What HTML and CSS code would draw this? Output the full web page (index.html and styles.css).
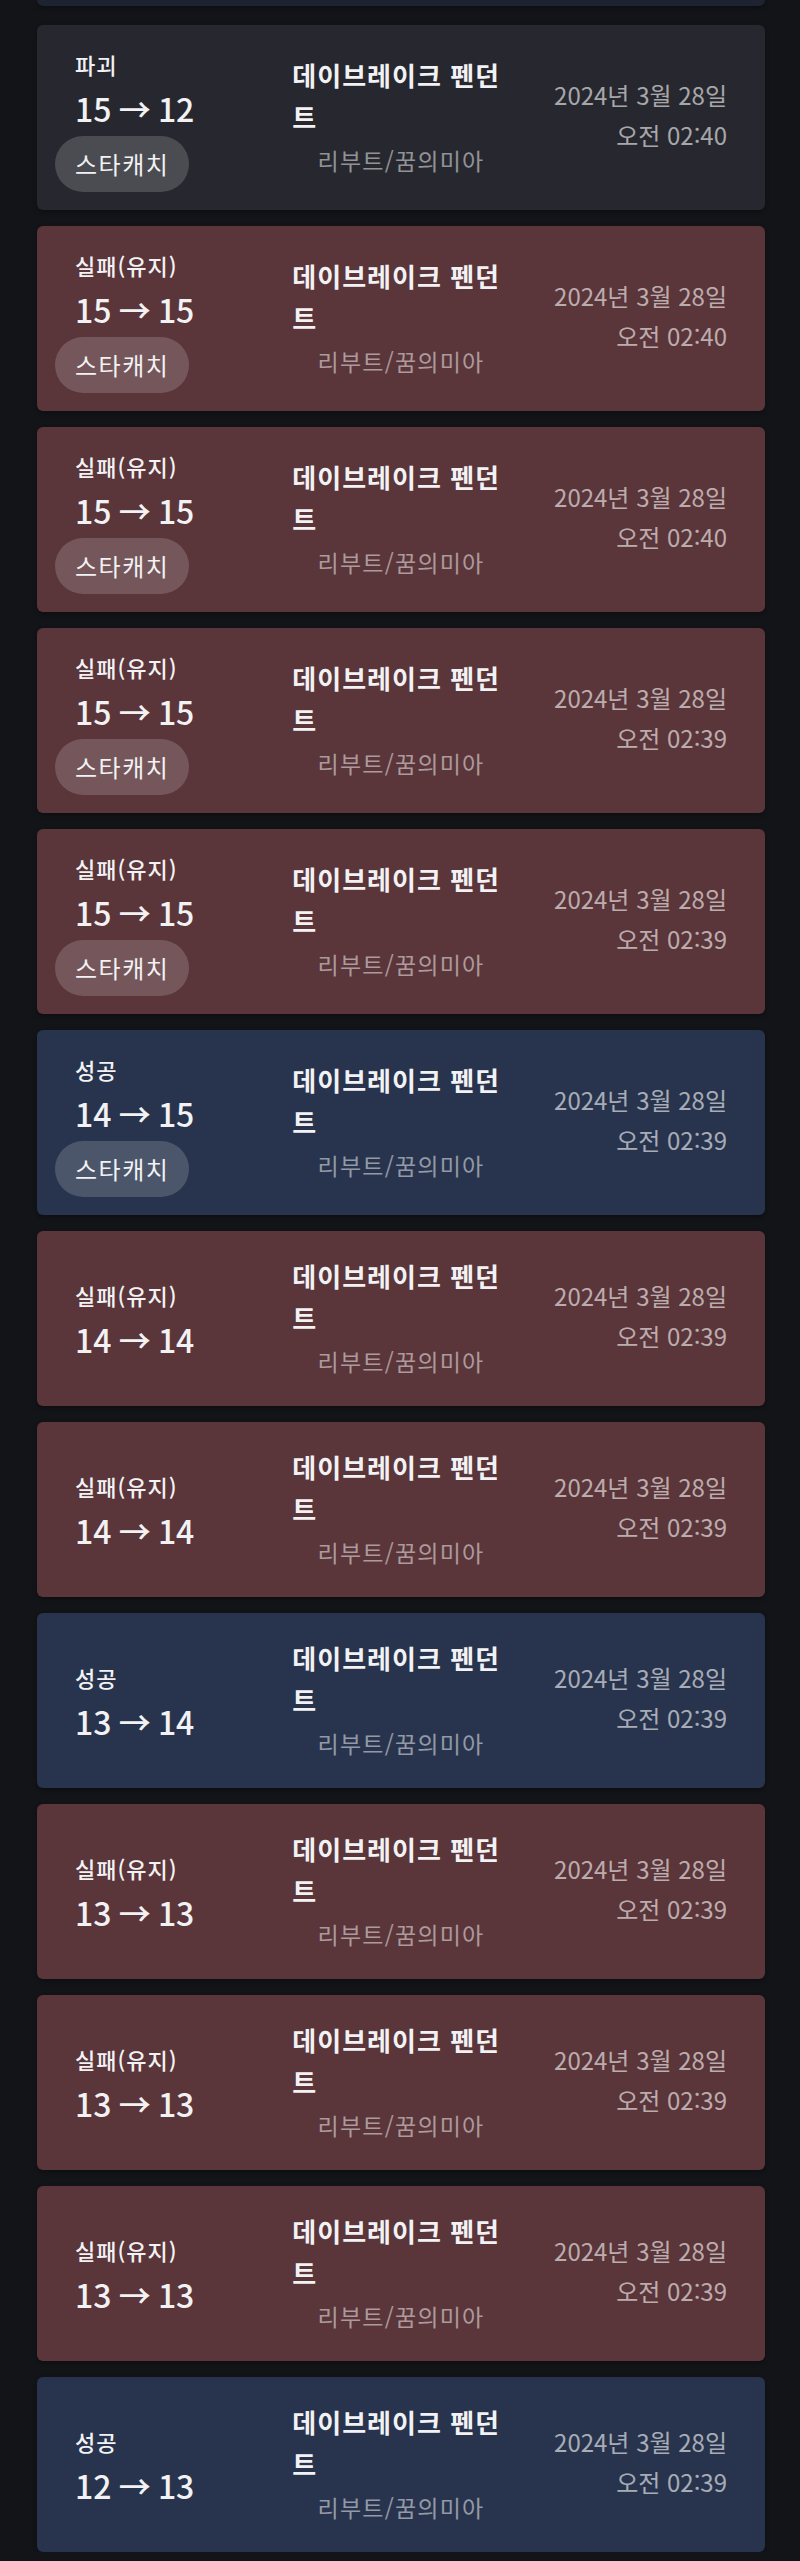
FILE: index.html
```html
<!DOCTYPE html>
<html lang="ko">
<head>
  <meta charset="UTF-8">
  <title>스타포스 강화 기록</title>
  <link rel="stylesheet" href="styles.css">
</head>
<body>
<div class="list">
  <div class="card card-prev"></div>

  <div class="card destroy">
    <div class="result">
      <div class="label">파괴</div>
      <div class="stars">15 → 12</div>
      <span class="badge">스타캐치</span>
    </div>
    <div class="item">
      <div class="item-name">데이브레이크 펜던트</div>
      <div class="item-owner">리부트/꿈의미아</div>
    </div>
    <div class="date">2024년 3월 28일<br>오전 02:40</div>
  </div>

  <div class="card fail">
    <div class="result">
      <div class="label">실패(유지)</div>
      <div class="stars">15 → 15</div>
      <span class="badge">스타캐치</span>
    </div>
    <div class="item">
      <div class="item-name">데이브레이크 펜던트</div>
      <div class="item-owner">리부트/꿈의미아</div>
    </div>
    <div class="date">2024년 3월 28일<br>오전 02:40</div>
  </div>

  <div class="card fail">
    <div class="result">
      <div class="label">실패(유지)</div>
      <div class="stars">15 → 15</div>
      <span class="badge">스타캐치</span>
    </div>
    <div class="item">
      <div class="item-name">데이브레이크 펜던트</div>
      <div class="item-owner">리부트/꿈의미아</div>
    </div>
    <div class="date">2024년 3월 28일<br>오전 02:40</div>
  </div>

  <div class="card fail">
    <div class="result">
      <div class="label">실패(유지)</div>
      <div class="stars">15 → 15</div>
      <span class="badge">스타캐치</span>
    </div>
    <div class="item">
      <div class="item-name">데이브레이크 펜던트</div>
      <div class="item-owner">리부트/꿈의미아</div>
    </div>
    <div class="date">2024년 3월 28일<br>오전 02:39</div>
  </div>

  <div class="card fail">
    <div class="result">
      <div class="label">실패(유지)</div>
      <div class="stars">15 → 15</div>
      <span class="badge">스타캐치</span>
    </div>
    <div class="item">
      <div class="item-name">데이브레이크 펜던트</div>
      <div class="item-owner">리부트/꿈의미아</div>
    </div>
    <div class="date">2024년 3월 28일<br>오전 02:39</div>
  </div>

  <div class="card success">
    <div class="result">
      <div class="label">성공</div>
      <div class="stars">14 → 15</div>
      <span class="badge">스타캐치</span>
    </div>
    <div class="item">
      <div class="item-name">데이브레이크 펜던트</div>
      <div class="item-owner">리부트/꿈의미아</div>
    </div>
    <div class="date">2024년 3월 28일<br>오전 02:39</div>
  </div>

  <div class="card fail">
    <div class="result">
      <div class="label">실패(유지)</div>
      <div class="stars">14 → 14</div>
    </div>
    <div class="item">
      <div class="item-name">데이브레이크 펜던트</div>
      <div class="item-owner">리부트/꿈의미아</div>
    </div>
    <div class="date">2024년 3월 28일<br>오전 02:39</div>
  </div>

  <div class="card fail">
    <div class="result">
      <div class="label">실패(유지)</div>
      <div class="stars">14 → 14</div>
    </div>
    <div class="item">
      <div class="item-name">데이브레이크 펜던트</div>
      <div class="item-owner">리부트/꿈의미아</div>
    </div>
    <div class="date">2024년 3월 28일<br>오전 02:39</div>
  </div>

  <div class="card success">
    <div class="result">
      <div class="label">성공</div>
      <div class="stars">13 → 14</div>
    </div>
    <div class="item">
      <div class="item-name">데이브레이크 펜던트</div>
      <div class="item-owner">리부트/꿈의미아</div>
    </div>
    <div class="date">2024년 3월 28일<br>오전 02:39</div>
  </div>

  <div class="card fail">
    <div class="result">
      <div class="label">실패(유지)</div>
      <div class="stars">13 → 13</div>
    </div>
    <div class="item">
      <div class="item-name">데이브레이크 펜던트</div>
      <div class="item-owner">리부트/꿈의미아</div>
    </div>
    <div class="date">2024년 3월 28일<br>오전 02:39</div>
  </div>

  <div class="card fail">
    <div class="result">
      <div class="label">실패(유지)</div>
      <div class="stars">13 → 13</div>
    </div>
    <div class="item">
      <div class="item-name">데이브레이크 펜던트</div>
      <div class="item-owner">리부트/꿈의미아</div>
    </div>
    <div class="date">2024년 3월 28일<br>오전 02:39</div>
  </div>

  <div class="card fail">
    <div class="result">
      <div class="label">실패(유지)</div>
      <div class="stars">13 → 13</div>
    </div>
    <div class="item">
      <div class="item-name">데이브레이크 펜던트</div>
      <div class="item-owner">리부트/꿈의미아</div>
    </div>
    <div class="date">2024년 3월 28일<br>오전 02:39</div>
  </div>

  <div class="card success">
    <div class="result">
      <div class="label">성공</div>
      <div class="stars">12 → 13</div>
    </div>
    <div class="item">
      <div class="item-name">데이브레이크 펜던트</div>
      <div class="item-owner">리부트/꿈의미아</div>
    </div>
    <div class="date">2024년 3월 28일<br>오전 02:39</div>
  </div>
</div>
</body>
</html>
```

FILE: styles.css
```css
body {
  margin: 0;
  background: #131418;
  color: #f2f2f4;
  font-family: "Noto Sans CJK KR", "Noto Sans", sans-serif;
}
.list {
  display: flex;
  flex-direction: column;
  gap: 16px;
  padding: 0 35px 0 37px;
}
.card {
  display: grid;
  grid-template-columns: 1fr 1fr 1fr;
  align-items: center;
  padding: 18px 38px;
  border-radius: 6px;
  box-shadow: 0 2px 4px rgba(0,0,0,0.3);
}
.card-prev {
  height: 6px;
  padding: 0;
  margin-bottom: 3px;
  border-radius: 0 0 6px 6px;
  background: #1e2332;
}
.destroy {
  background: #27282f;
}
.fail {
  background: #5a353a;
}
.success {
  background: #28344d;
}
.result {
  display: flex;
  flex-direction: column;
  align-items: flex-start;
}
.label {
  font-size: 22px;
  font-weight: 500;
  line-height: 42px;
  letter-spacing: 1px;
}
.stars {
  font-size: 32px;
  font-weight: 500;
  line-height: 47px;
}
.badge {
  margin: 4px 0 0 -20px;
  padding: 0 20px;
  height: 56px;
  line-height: 56px;
  border-radius: 28px;
  font-size: 24px;
  letter-spacing: 1.5px;
  background: rgba(255,255,255,0.17);
}
.item {
  padding: 6px 0 5px;
}
.item-name {
  font-size: 26px;
  font-weight: 700;
  line-height: 42px;
  letter-spacing: 1px;
}
.item-owner {
  font-size: 23px;
  line-height: 44px;
  letter-spacing: 1.2px;
  text-align: center;
  color: rgba(255,255,255,0.5);
}
.date {
  padding-bottom: 6px;
  font-size: 24px;
  line-height: 40px;
  text-align: right;
  color: rgba(255,255,255,0.6);
}
```
